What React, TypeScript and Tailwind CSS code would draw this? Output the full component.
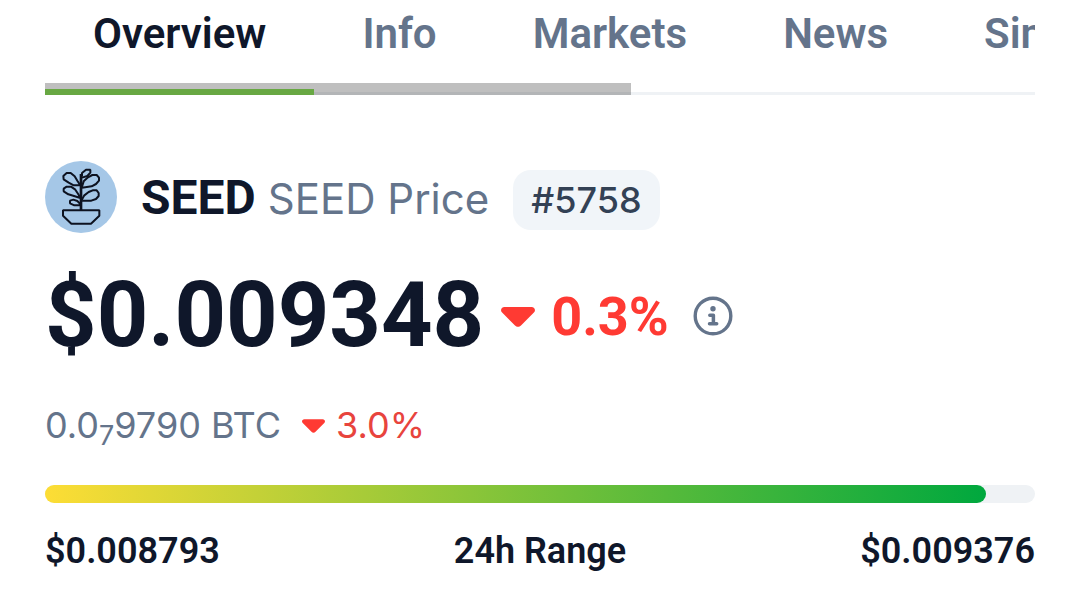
function DownArrow({ className }: { className: string }) {
  return (
    <svg viewBox="0 0 34 20" className={className} aria-hidden="true">
      <path
        d="M3.5 0h27c3.2 0 4.6 3.4 2.4 5.6L20 18.4c-1.700 1.900-4.300 1.900-6 0L1.100 5.600C-1.100 3.400.300 0 3.500 0z"
        fill="#ff3a33"
      />
    </svg>
  );
}

function InfoIcon() {
  return (
    <svg viewBox="0 0 40 40" className="size-10" fill="none" stroke="#64748b" aria-hidden="true">
      <circle cx="20" cy="20" r="17.8" strokeWidth="3.4" />
      <circle cx="20" cy="12.800" r="2.700" fill="#64748b" stroke="none" />
      <path d="M16.800 19.200h3.600v8.500M16.500 27.700h7.200" strokeWidth="3.500" strokeLinecap="round" strokeLinejoin="round" />
    </svg>
  );
}

function SeedLogo() {
  return (
    <svg viewBox="30 33 216 216" className="size-[72px] shrink-0" role="img" aria-label="SEED">
      <circle cx="138" cy="141" r="108" fill="#a5c7e7" />
      <g fill="none" stroke="#0d1220" strokeWidth="6" strokeLinejoin="bevel">
        <path d="M138 182V72" strokeWidth="8" />
        <path d="M84 181h109v16l-25 24h-59l-25-24z" />
        <path d="M136 106H116L101 98 86 88 85 78 95 69h12l12 10 8 13 9 14" />
        <path d="M141 79V69l12-10h13v9l-9 10-16 5" />
        <path d="M141 110l5-16 13-12 13-7h13l7 8v9l-9 10-13 7-29 4" />
        <path d="M136 144l-19-6-17-5-14-9v-8l9-6h13l13 9 9 14 6 11" />
        <path d="M140 150l8-14 13-10 12-5h12l6 8v9l-8 9-14 5h-29" />
        <path d="M136 166h-18l-13-6v-8l10-3 12 4 9 9" />
      </g>
    </svg>
  );
}

export default function App() {
  return (
    <main className="overflow-hidden bg-white px-[45px] font-['Roboto',sans-serif] text-[#0f172a]">
      <div className="relative overflow-hidden">
        <nav className="flex h-[95px] whitespace-nowrap border-b-3 border-[#eff2f5] text-[42px] font-semibold leading-[48px] text-[#64748b]">
          <a href="#overview" className="shrink-0 px-12 pt-[10px] text-[#0f172a]">Overview</a>
          <a href="#info" className="shrink-0 px-12 pt-[10px]">Info</a>
          <a href="#markets" className="shrink-0 px-12 pt-[10px]">Markets</a>
          <a href="#news" className="shrink-0 px-12 pt-[10px]">News</a>
          <a href="#similar" className="shrink-0 px-12 pt-[10px]">Similar Coins</a>
        </nav>
        <div className="absolute bottom-0 left-0 h-3 w-[586px] bg-black/25" />
        <div className="absolute bottom-0 left-0 h-1.5 w-[269px] bg-[#68a843]" />
      </div>
      <header className="mt-[66px] flex h-[72px] items-center whitespace-nowrap">
        <SeedLogo />
        <h1 className="ml-6 mt-0.5 flex items-baseline gap-3 text-[48px] font-bold leading-[72px]">
          SEED
          <span className="font-['Inter',sans-serif] text-[42px] font-normal text-[#64748b]">SEED Price</span>
        </h1>
        <span className="ml-6 mt-1.5 rounded-[18px] bg-[#f1f5f9] px-[18px] font-['Inter',sans-serif] text-[36px] font-medium leading-[60px] text-[#334155]">#5758</span>
      </header>
      <div className="mt-[23px] flex h-[120px] items-center">
        <span className="text-[90px] font-bold leading-[120px]">$0.009348</span>
        <DownArrow className="ml-[17px] mt-0.5 h-5 w-[34px]" />
        <span className="ml-4 text-[54px] font-bold text-[#ff3a33]">0.3%</span>
        <button type="button" aria-label="Price information" className="ml-6">
          <InfoIcon />
        </button>
      </div>
      <div className="mt-[25px] flex h-12 items-center font-['Inter',sans-serif] text-[36px] text-[#64748b]">
        <span>0.0<sub>7</sub>9790 BTC</span>
        <DownArrow className="ml-[21px] mt-0.5 h-[14px] w-[23px]" />
        <span className="ml-[11px] text-[#e8443d]">3.0%</span>
      </div>
      <div className="mt-9 h-[18px] rounded-full bg-[#eff2f5]">
        <div className="h-full w-[95%] rounded-full bg-linear-to-r/srgb from-[#fddd35] to-[#00a83e]" />
      </div>
      <div className="mt-6 flex justify-between text-[36px] font-semibold leading-12">
        <span>$0.008793</span>
        <span>24h Range</span>
        <span>$0.009376</span>
      </div>
    </main>
  );
}
